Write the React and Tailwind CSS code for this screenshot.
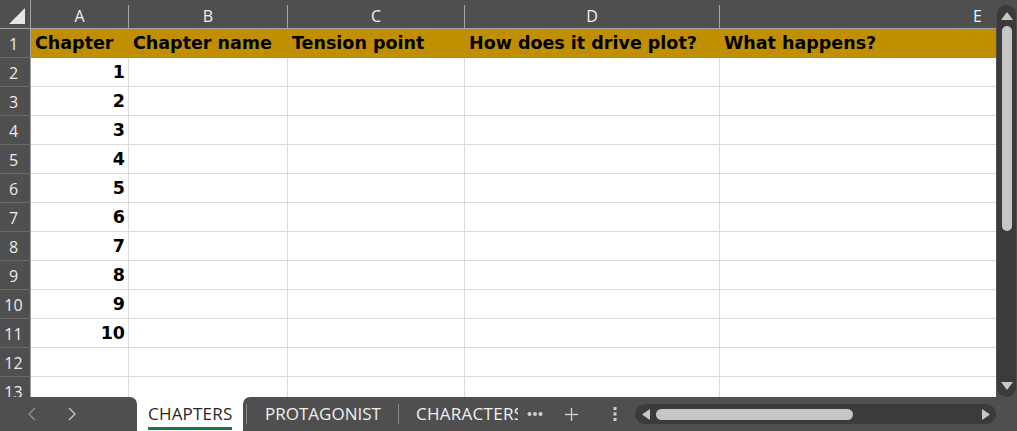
import React from "react";

const cols = [
  { key: "A", w: "w-[98px]" },
  { key: "B", w: "w-[159px]" },
  { key: "C", w: "w-[177px]" },
  { key: "D", w: "w-[255px]" },
  { key: "E", w: "w-[276px]" },
];

const headers = ["Chapter", "Chapter name", "Tension point", "How does it drive plot?", "What happens?"];

const ui = { fontFamily: '"Open Sans", "Noto Sans", sans-serif' };
const bold = { fontFamily: '"DejaVu Sans", "Liberation Sans", sans-serif' };

function ColHeader() {
  return (
    <div className="flex h-[29px] border-b border-[#a3a3a3] bg-[#4f4f4f] shrink-0" style={ui}>
      <div className="w-[31px] shrink-0 border-r border-[#a3a3a3] flex items-center justify-center">
        <svg width="17" height="17" viewBox="0 0 17 17" className="ml-[5px] mt-[4px]">
          <polygon points="16,0 16,16 0,16" fill="#e6e6e6" />
        </svg>
      </div>
      {cols.map((c, i) => (
        <div key={c.key} className={`${c.w} shrink-0 flex`}>
          <div
            className={`flex-1 flex items-center text-[16px] text-[#f2f2f2] ${
              i === 4 ? "justify-end pr-[14px]" : "justify-center"
            }`}
          >
            <span className="leading-none -mb-[3px]">{c.key}</span>
          </div>
          {i < 4 && <div className="w-px h-[23px] self-end bg-[#a3a3a3]" />}
        </div>
      ))}
    </div>
  );
}

function Row({ n }) {
  const gold = n === 1;
  const cellBorder = gold ? "border-[#bf8f00]" : "border-[#dadada]";
  return (
    <div className={`flex h-[29px] shrink-0 ${gold ? "bg-[#bf8f00]" : "bg-white"}`}>
      <div
        className="w-[31px] shrink-0 bg-[#4f4f4f] border-r border-[#a3a3a3] border-b border-b-[#6a6a6a] flex items-center justify-center pr-[3px] text-[16px] text-[#ececec]"
        style={ui}
      >
        <span className="-mb-[1px]">{n}</span>
      </div>
      {cols.map((c, i) => (
        <div
          key={c.key}
          className={`${c.w} shrink-0 border-b ${i < 4 ? "border-r" : ""} ${cellBorder} flex items-center overflow-visible whitespace-nowrap text-[17.5px] font-bold text-black ${
            gold ? "pl-[4px]" : i === 0 ? "justify-end pr-[3px]" : ""
          }`}
          style={bold}
        >
          {gold ? headers[i] : i === 0 && n <= 11 ? n - 1 : ""}
        </div>
      ))}
    </div>
  );
}

function VScroll() {
  return (
    <div className="w-[21px] shrink-0 bg-[#4f4f4f] flex flex-col">
      <div className="ml-[1px] mr-[1px] mt-[5px] h-[396px] rounded-full bg-[#3b3b3b] flex flex-col items-center">
        <svg width="12" height="8" viewBox="0 0 12 8" className="mt-[7px]">
          <polygon points="6,0 12,8 0,8" fill="#c8c8c8" />
        </svg>
        <div className="mt-[6px] w-[10px] h-[205px] rounded-full bg-[#c6c6c6]" />
        <div className="flex-1" />
        <svg width="12" height="8" viewBox="0 0 12 8" className="mb-[7px]">
          <polygon points="0,0 12,0 6,8" fill="#c8c8c8" />
        </svg>
      </div>
    </div>
  );
}

function TabBar() {
  return (
    <div className="flex h-[34px] shrink-0 bg-white" style={ui}>
      <div className="w-[137px] shrink-0 bg-[#4f4f4f] rounded-tr-[7px] flex items-center">
        <svg width="10" height="14" viewBox="0 0 10 14" className="ml-[27px]">
          <polyline points="8,1 2,7 8,13" fill="none" stroke="#8e8e8e" strokeWidth="1.4" />
        </svg>
        <svg width="10" height="14" viewBox="0 0 10 14" className="ml-[30px]">
          <polyline points="2,1 8,7 2,13" fill="none" stroke="#c4c4c4" strokeWidth="1.4" />
        </svg>
      </div>
      <div className="w-[106px] shrink-0 flex items-center pl-[11px]">
        <span className="pt-[6px] pb-[3px] border-b-[3px] border-[#107c41] leading-[20px] text-[17px] text-[#262626] tracking-[0.2px]">
          CHAPTERS
        </span>
      </div>
      <div className="flex-1 bg-[#4f4f4f] rounded-tl-[7px] flex items-center">
        <div className="ml-[3px] w-px h-[20px] bg-[#8a8a8a]" />
        <span className="ml-[18px] text-[17px] leading-[20px] text-[#f0f0f0]">PROTAGONIST</span>
        <div className="ml-[17px] w-px h-[20px] bg-[#8a8a8a]" />
        <div className="ml-[17px] w-[102px] overflow-hidden whitespace-nowrap">
          <span className="text-[17px] leading-[20px] text-[#f0f0f0] tracking-[0.3px]">CHARACTERS</span>
        </div>
        <svg width="16" height="6" viewBox="0 0 16 6" className="ml-[9px]">
          <circle cx="2.5" cy="3" r="2" fill="#d0d0d0" />
          <circle cx="8" cy="3" r="2" fill="#d0d0d0" />
          <circle cx="13.5" cy="3" r="2" fill="#d0d0d0" />
        </svg>
        <svg width="13" height="13" viewBox="0 0 13 13" className="ml-[22px]">
          <line x1="6.5" y1="0" x2="6.5" y2="13" stroke="#d6d6d6" strokeWidth="1.3" />
          <line x1="0" y1="6.5" x2="13" y2="6.5" stroke="#d6d6d6" strokeWidth="1.3" />
        </svg>
        <svg width="4" height="14" viewBox="0 0 4 14" className="ml-[35px]">
          <rect x="0.5" y="0" width="3" height="3" fill="#d0d0d0" />
          <rect x="0.5" y="5.5" width="3" height="3" fill="#d0d0d0" />
          <rect x="0.5" y="11" width="3" height="3" fill="#d0d0d0" />
        </svg>
        <div className="ml-[18px] w-[361px] h-[20px] rounded-full bg-[#3b3b3b] flex items-center">
          <svg width="8" height="11" viewBox="0 0 8 11" className="ml-[7px]">
            <polygon points="0,5.5 8,0 8,11" fill="#c8c8c8" />
          </svg>
          <div className="ml-[6px] w-[197px] h-[11px] rounded-full bg-[#c6c6c6]" />
          <div className="flex-1" />
          <svg width="8" height="11" viewBox="0 0 8 11" className="mr-[6px]">
            <polygon points="0,0 8,5.5 0,11" fill="#c8c8c8" />
          </svg>
        </div>
      </div>
    </div>
  );
}

export default function App() {
  const rows = Array.from({ length: 13 }, (_, i) => i + 1);
  return (
    <div className="w-[1017px] h-[431px] overflow-hidden flex flex-col bg-white">
      <div className="flex h-[397px] shrink-0">
        <div className="w-[996px] shrink-0 overflow-hidden flex flex-col">
          <ColHeader />
          {rows.map((n) => (
            <Row key={n} n={n} />
          ))}
        </div>
        <VScroll />
      </div>
      <TabBar />
    </div>
  );
}
